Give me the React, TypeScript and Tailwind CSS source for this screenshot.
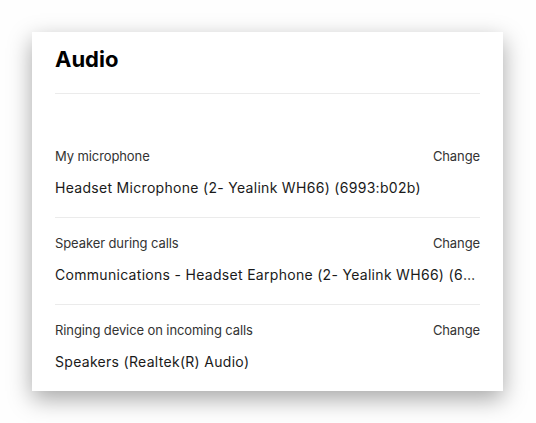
import React from 'react';

type Device = { label: string; value: string };

const devices: Device[] = [
  { label: 'My microphone', value: 'Headset Microphone (2- Yealink WH66) (6993:b02b)' },
  { label: 'Speaker during calls', value: 'Communications - Headset Earphone (2- Yealink WH66) (6993:b02b)' },
  { label: 'Ringing device on incoming calls', value: 'Speakers (Realtek(R) Audio)' },
];

export default function App() {
  return (
    <div className="min-h-screen bg-[#fefefe] pt-[32px] pl-[32px]" style={{ fontFamily: 'Inter, "Noto Sans", sans-serif' }}>
      <div className="w-[471px] bg-white px-[23px] pt-[13px] pb-[19px] shadow-[0_8px_22px_rgba(0,0,0,0.35)]">
        <h1 className="text-[22px] leading-[28px] font-bold text-black">Audio</h1>
        <div className="mt-[20px] h-px bg-[#ebebeb]" />

        <div className="mt-[52px]">
          {devices.map((d, i) => (
            <div key={d.label} className={i > 0 ? 'border-t border-[#ebebeb] pt-[15px]' : ''}>
              <div className="flex items-center justify-between text-[13px] leading-[20px] tracking-[-0.1px] text-[#333]">
                <span>{d.label}</span>
                <button className="text-[#333]">Change</button>
              </div>
              <div className={`mt-[12px] truncate text-[14px] leading-[20px] tracking-[0.3px] text-[#1a1a1a] ${i < devices.length - 1 ? 'pb-[19px]' : ''}`}>
                {d.value}
              </div>
            </div>
          ))}
        </div>
      </div>
    </div>
  );
}
